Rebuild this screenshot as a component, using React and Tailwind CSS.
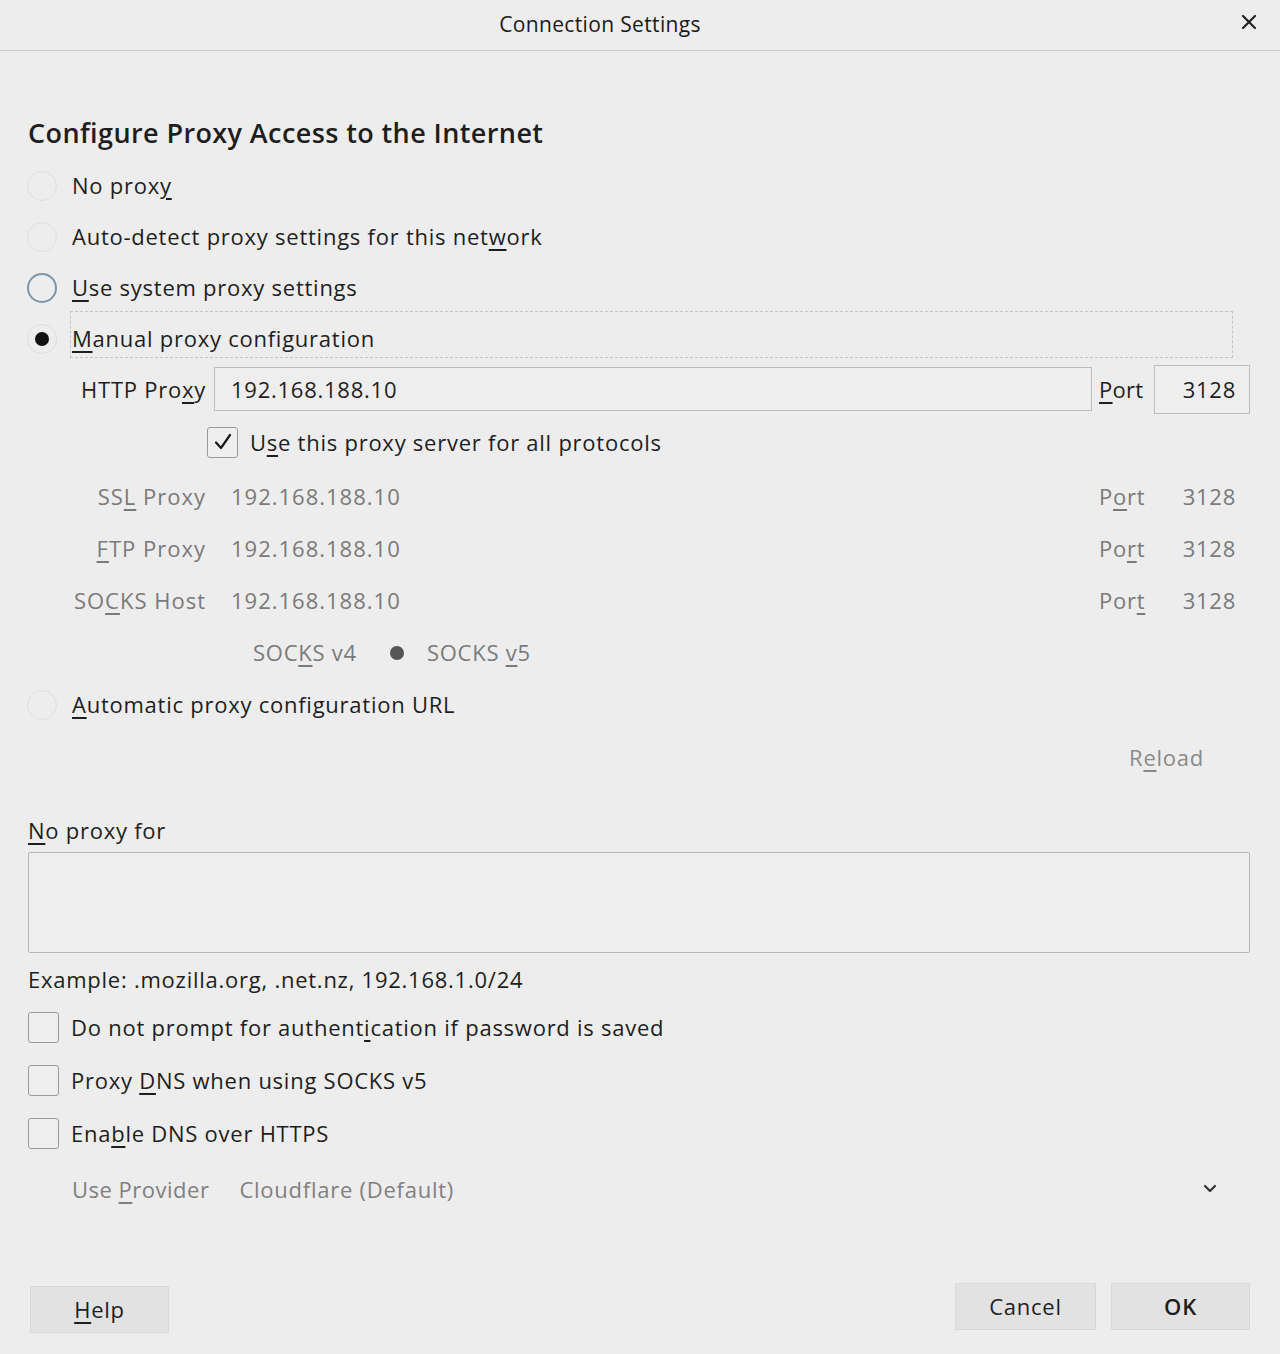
import React from "react";

const FONT = { fontFamily: "'Open Sans', 'Noto Sans', sans-serif" };

function Radio({ state = "faint" }) {
  if (state === "checked") {
    return (
      <span className="flex h-[30px] w-[30px] items-center justify-center rounded-full border border-[#dcdcdc]">
        <span className="h-[14px] w-[14px] rounded-full bg-[#111]" />
      </span>
    );
  }
  if (state === "normal") {
    return <span className="block h-[30px] w-[30px] rounded-full border-2 border-[#7c95a8]" />;
  }
  return <span className="block h-[30px] w-[30px] rounded-full border border-[#dedede]" />;
}

function Box({ checked }) {
  return (
    <span className="flex h-[31px] w-[31px] items-center justify-center rounded-[3px] border border-[#9a9a9a] bg-[#efefef]">
      {checked && (
        <svg width="22" height="22" viewBox="0 0 22 22" fill="none">
          <path d="M4 11.5 L9 17 L18 4" stroke="#1a1a1a" strokeWidth="2.2" strokeLinecap="round" strokeLinejoin="round" />
        </svg>
      )}
    </span>
  );
}

function RadioRow({ state, children }) {
  return (
    <div className="flex h-[51px] items-center">
      <Radio state={state} />
      <span className="ml-[15px] text-[22px] text-[#1e1e1e]">{children}</span>
    </div>
  );
}

function DisabledRow({ label, port }) {
  return (
    <div className="grid h-[52px] grid-cols-[187px_878px_62px_96px] items-center text-[22px] text-[#7a7a7a]">
      <span className="pr-[8px] text-right tracking-[1px]">{label}</span>
      <span className="pl-[17px] tracking-[1px]">192.168.188.10</span>
      <span className="pl-[7px]">{port}</span>
      <span className="pr-[14px] text-right">3128</span>
    </div>
  );
}

function CheckRow({ children }) {
  return (
    <div className="flex h-[53px] items-center pl-[1px]">
      <Box />
      <span className="ml-[12px] text-[22px] text-[#1e1e1e]">{children}</span>
    </div>
  );
}

export default function App() {
  return (
    <div className="flex h-[1354px] w-[1280px] flex-col bg-[#ededed] tracking-[0.75px]" style={FONT}>
      {/* title bar */}
      <div className="relative flex h-[51px] shrink-0 items-center justify-center border-b border-[#c9c9c9] pr-[80px]">
        <span className="text-[21px] tracking-[0.35px] text-[#1a1a1a]">Connection Settings</span>
        <svg className="absolute right-[23px] top-[14px]" width="16" height="16" viewBox="0 0 16 16">
          <path d="M2 2 L14 14 M14 2 L2 14" stroke="#222" strokeWidth="2.2" strokeLinecap="round" />
        </svg>
      </div>

      <div className="flex flex-1 flex-col px-[27px]">
        <div className="mt-[60px] flex h-[44px] items-center pl-[1px] text-[27px] font-semibold tracking-[0.4px] text-[#1e1e1e]">
          Configure Proxy Access to the Internet
        </div>

        <div className="mt-[5px] flex flex-col">
          <RadioRow state="faint">
            No prox<u className="underline-offset-4">y</u>
          </RadioRow>
          <RadioRow state="faint">
            Auto-detect proxy settings for this net<u className="underline-offset-4">w</u>ork
          </RadioRow>
          <RadioRow state="normal">
            <u className="underline-offset-4">U</u>se system proxy settings
          </RadioRow>
          <div className="relative flex h-[51px] items-center">
            <Radio state="checked" />
            <span className="ml-[15px] text-[22px] text-[#1e1e1e]">
              <u className="underline-offset-4">M</u>anual proxy configuration
            </span>
            <span className="pointer-events-none absolute left-[43px] right-[20px] top-[-2px] bottom-[6px] border border-dashed border-[#c4c4c4]" />
          </div>
        </div>

        {/* HTTP proxy */}
        <div className="grid h-[50px] grid-cols-[187px_878px_62px_96px] items-center text-[22px] text-[#1e1e1e]">
          <span className="pr-[8px] text-right">
            HTTP Pro<u className="underline-offset-4">x</u>y
          </span>
          <div className="flex h-[44px] items-center border border-[#bdbdbd] bg-[#eeeeee] pl-[16px]">
            192.168.188.10
          </div>
          <span className="pl-[7px] tracking-[0.3px]">
            <u className="underline-offset-4">P</u>ort
          </span>
          <div className="flex h-[49px] items-center justify-end border border-[#bdbdbd] bg-[#eeeeee] pr-[13px]">3128</div>
        </div>

        <div className="flex h-[56px] items-center pl-[180px]">
          <Box checked />
          <span className="ml-[12px] text-[22px] text-[#1e1e1e]">
            U<u className="underline-offset-4">s</u>e this proxy server for all protocols
          </span>
        </div>

        <DisabledRow
          label={<>SS<u className="underline-offset-4">L</u> Proxy</>}
          port={<>P<u className="underline-offset-4">o</u>rt</>}
        />
        <DisabledRow
          label={<><u className="underline-offset-4">F</u>TP Proxy</>}
          port={<>Po<u className="underline-offset-4">r</u>t</>}
        />
        <DisabledRow
          label={<>SO<u className="underline-offset-4">C</u>KS Host</>}
          port={<>Por<u className="underline-offset-4">t</u></>}
        />

        <div className="flex h-[53px] items-center pl-[226px] text-[22px] text-[#7a7a7a]">
          <span>
            SOC<u className="underline-offset-4">K</u>S v4
          </span>
          <span className="ml-[33px] h-[14px] w-[14px] rounded-full bg-[#555]" />
          <span className="ml-[23px]">
            SOCKS <u className="underline-offset-4">v</u>5
          </span>
        </div>

        <RadioRow state="faint">
          <u className="underline-offset-4">A</u>utomatic proxy configuration URL
        </RadioRow>

        <div className="flex h-[54px] items-center justify-end pr-[49px] text-[22px] text-[#8a8a8a]">
          <span>
            R<u className="underline-offset-4">e</u>load
          </span>
        </div>

        <div className="mt-[30px] flex h-[32px] items-center pl-[1px] text-[22px] text-[#1e1e1e]">
          <span>
            <u className="underline-offset-4">N</u>o proxy for
          </span>
        </div>
        <div className="mt-[6px] ml-[1px] h-[101px] w-[1222px] rounded-[2px] border border-[#b8b8b8] bg-[#eeeeee]" />

        <div className="mt-[9px] flex h-[34px] items-center pl-[1px] text-[22px] text-[#1e1e1e]">
          Example: .mozilla.org, .net.nz, 192.168.1.0/24
        </div>

        <div className="mt-[5px] flex flex-col">
          <CheckRow>
            Do not prompt for authent<u className="underline-offset-4">i</u>cation if password is saved
          </CheckRow>
          <CheckRow>
            Proxy <u className="underline-offset-4">D</u>NS when using SOCKS v5
          </CheckRow>
          <CheckRow>
            Ena<u className="underline-offset-4">b</u>le DNS over HTTPS
          </CheckRow>
        </div>

        <div className="mt-[7px] flex h-[44px] items-center pl-[45px] pr-[36px] text-[22px] text-[#808080]">
          <span className="tracking-[0.5px]">
            Use <u className="underline-offset-4">P</u>rovider
          </span>
          <span className="ml-[30px]">Cloudflare (Default)</span>
          <svg className="ml-auto" width="14" height="10" viewBox="0 0 14 10">
            <path d="M2 2 L7 7 L12 2" stroke="#333" strokeWidth="2.2" fill="none" strokeLinecap="round" strokeLinejoin="round" />
          </svg>
        </div>

        <div className="mt-auto mb-[22px] flex items-end">
          <button className="ml-[3px] mb-[-1px] flex h-[47px] w-[139px] items-center justify-center border border-[#d8d8d8] bg-[#e2e2e2] text-[22px] text-[#1e1e1e]">
            <span>
              <u className="underline-offset-4">H</u>elp
            </span>
          </button>
          <div className="ml-auto flex gap-[15px] pb-[2px]">
            <button className="flex h-[47px] w-[141px] items-center justify-center border border-[#d8d8d8] bg-[#e2e2e2] text-[22px] text-[#1e1e1e]">
              Cancel
            </button>
            <button className="flex h-[47px] w-[139px] items-center justify-center border border-[#d8d8d8] bg-[#e2e2e2] text-[22px] font-semibold text-[#1e1e1e]">
              OK
            </button>
          </div>
          <span className="w-[3px]" />
        </div>
      </div>
    </div>
  );
}
